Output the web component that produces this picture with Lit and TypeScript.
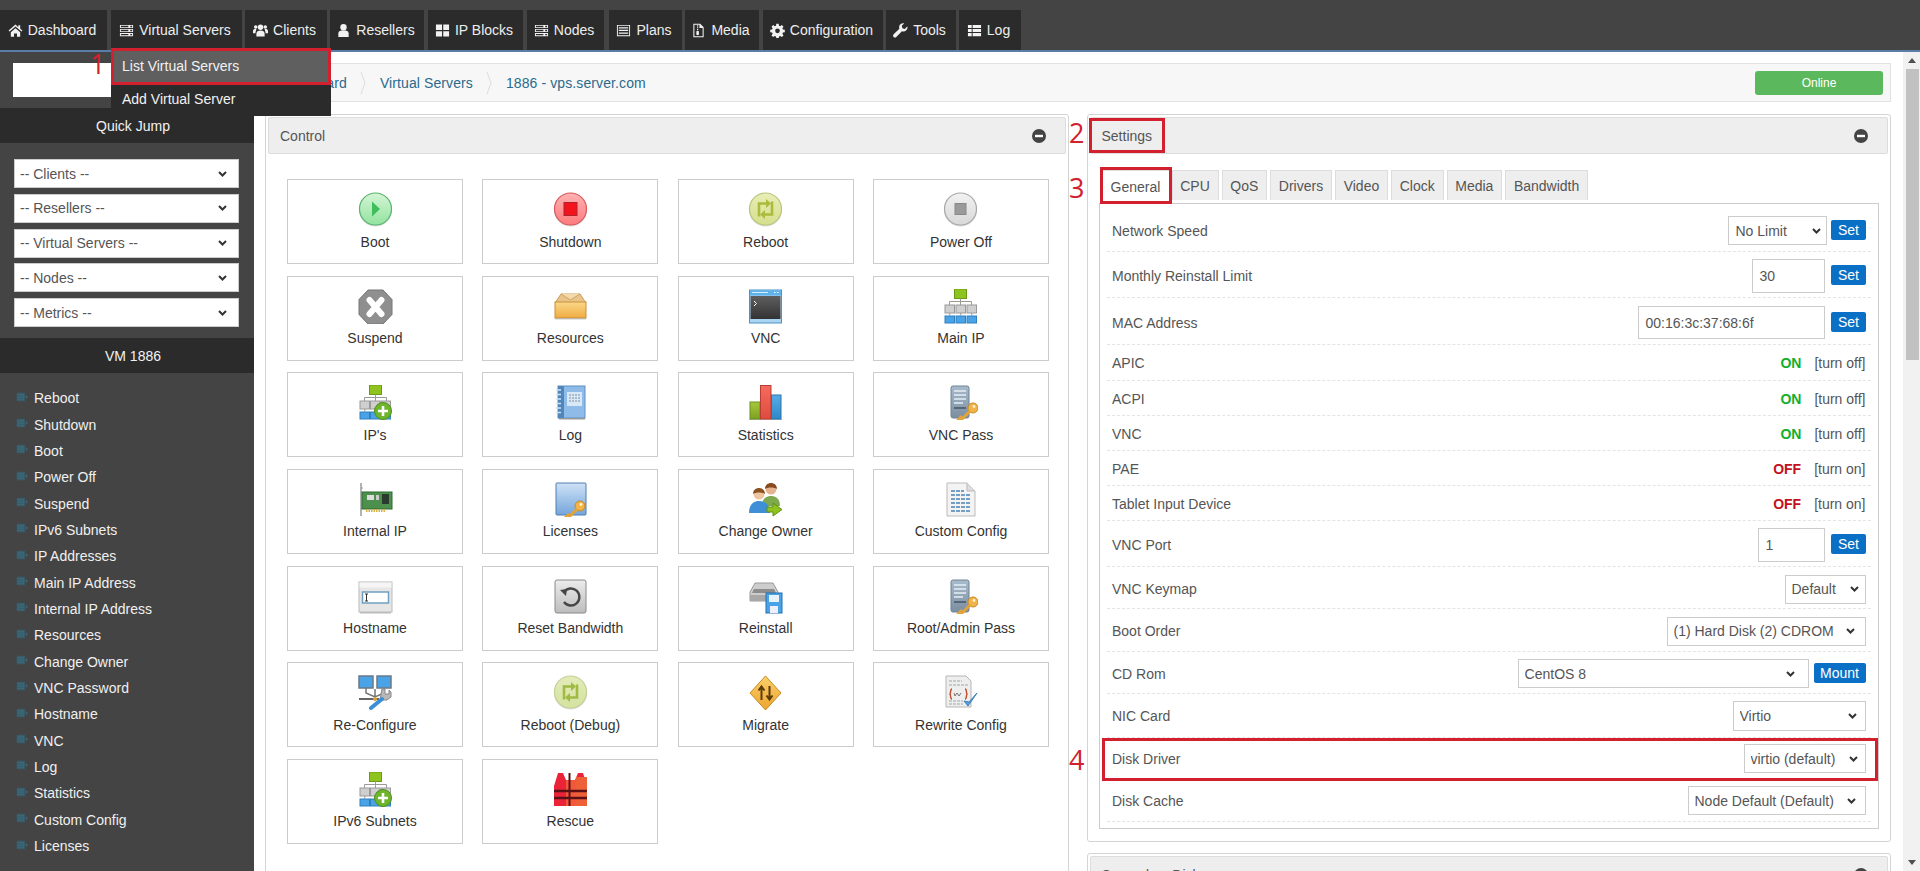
import { LitElement, html, css, svg } from "lit";
import { customElement } from "lit/decorators.js";

/* ---------- nav glyphs ---------- */
const serverGlyph = svg`<path d="M1 2h14v3.4H1zM2 3v1.4h8V3zM12 3v1.4h2V3zM1 6.3h14v3.4H1zM2 7.3v1.4h8V7.3zM12 7.3v1.4h2V7.3zM1 10.6h14V14H1zM2 11.6V13h8v-1.4zM12 11.6V13h2v-1.4z" fill-rule="evenodd"/>`;
const nav: Record<string, unknown> = {
  home: svg`<path d="M8 1.6.6 8l1 1.1L8 3.6l6.4 5.5 1-1.1-2.4-2V2.4h-2v2L8 1.6zM3 9.8 8 5.5l5 4.3V14.6H9.6v-3.4H6.4v3.4H3z"/>`,
  server: serverGlyph,
  users: svg`<circle cx="8" cy="4.6" r="2.9"/><path d="M3.6 14.4v-2.9C3.6 9.3 5.4 8 8 8s4.4 1.3 4.4 3.5v2.9z"/><circle cx="2.9" cy="4.3" r="1.9"/><circle cx="13.1" cy="4.3" r="1.9"/><path d="M0 11V8.5C0 7 1.2 6.4 2.4 6.4c.6 0 1 .1 1.3.3C3.5 7.400 2.800 8.500 2.600 11zM16 11V8.500C16 7 14.800 6.400 13.600 6.400c-.6 0-1 .1-1.300.3.2.7.9 1.800 1.100 4.300z"/>`,
  user: svg`<circle cx="8" cy="4.400" r="3.400"/><path d="M2.500 15v-3.800C2.500 9 4.500 7.800 8 7.800s5.500 1.200 5.500 3.400V15z"/>`,
  grid: svg`<path d="M1 1.500h6.500V7.500H1zM8.800 1.500H15V7.500H8.800zM1 8.800h6.500v5.700H1zM8.800 8.800H15v5.700H8.800z"/>`,
  plans: svg`<path fill-rule="evenodd" d="M1 2h14v12H1zM2 3v10h12V3zM3 4.500h10v1.300H3zM3 7.300h10v1.300H3zM3 10.100h10v1.300H3z"/>`,
  media: svg`<path fill-rule="evenodd" d="M2.500.8h7.300l3.700 3.700v10.700h-11zM3.600 1.900v12.200h8.800V5.300H9V1.900zM6.400 2.500h1.300v1.200H6.400zM6.400 4.500h1.300v1.200H6.400zM6.400 6.500h1.300v1.200H6.400zM5.900 8.500h2.300l.4 3.300c0 .8-.6 1.200-1.500 1.200s-1.500-.4-1.500-1.200z"/>`,
  cog: svg`<path fill-rule="evenodd" d="M6.700.8h2.600l.3 2 1.300.6 1.700-1.200 1.800 1.800-1.200 1.700.6 1.300 2 .3v2.600l-2 .3-.6 1.300 1.200 1.700-1.800 1.800-1.700-1.200-1.300.6-.3 2H6.700l-.3-2-1.300-.6-1.700 1.200-1.800-1.800 1.200-1.700-.6-1.300-2-.3V7.300l2-.3.6-1.300-1.200-1.700 1.800-1.800 1.700 1.200 1.300-.6zM8 5.800a2.500 2.500 0 1 0 0 5 2.500 2.500 0 0 0 0-5z"/>`,
  wrench: svg`<path d="M15.200 3.700 12.600 6.300 10 5.600 9.300 3 11.900.4C9.800-.2 7.600.8 6.800 2.800c-.4 1.100-.4 2.200 0 3.200L.7 12.100c-.8.8-.8 2 0 2.800s2 .8 2.800 0l6-6.100c2.900 1.100 6-1 6-4 0-.4 0-.8-.3-1.100z"/>`,
  list: svg`<path d="M1 2h4v3.400H1zM6 2h9v3.400H6zM1 6.300h4v3.400H1zM6 6.300h9v3.400H6zM1 10.600h4V14H1zM6 10.600h9V14H6z"/>`,
};

/* ---------- tile artwork ---------- */
const roundBtn = (grad: string, edge: string, inner: unknown) => svg`
  <ellipse cx="17.500" cy="18.500" rx="16.500" ry="16" fill="#000" opacity=".14"/>
  <circle cx="17.500" cy="17" r="16" fill="url(#${grad})" stroke="${edge}" stroke-width="1.200"/>${inner}`;
const loopArrows = (c: string) => svg`<g fill="none" stroke="${c}" stroke-width="2.600">
  <path d="M11 24.500V11.500h8"/><path d="M24 9.500v13h-8"/></g>
  <path d="M18 7l5 4.500-5 4.500z" fill="${c}"/><path d="M17 18l-5 4.500 5 4.500z" fill="${c}"/>`;
const key = (x: number, y: number) => svg`<g transform="translate(${x} ${y})">
  <circle cx="8" cy="-7" r="5" fill="#f0b44a" stroke="#c88a24"/><circle cx="9" cy="-8.500" r="1.400" fill="#fff3cf"/>
  <path d="M5-4-5 6l-1.500-1.500L-4 2-5 1" fill="none" stroke="#e2a33a" stroke-width="3"/></g>`;
const server = svg`<rect x="8" y="1" width="18" height="32" rx="2" fill="url(#gSrv)" stroke="#6f8294"/>
  <path d="M11 6h12M11 10h12M11 14h12M11 18h9" stroke="#e7eef4" stroke-width="1.600"/>
  <rect x="11" y="22" width="12" height="2" fill="#556677"/>`;
const netTree = (plus: boolean) => {
  const rows = plus ? [2, 12.500, 23] : [2, 13, 24];
  return svg`<rect x="11.500" y="0" width="12" height="9.500" fill="#8fc31f" stroke="#6c9a12"/>
  <path d="M17.500 9.500v3M6.500 16v-3.500h22V16M17.500 12.500V16" fill="none" stroke="#9a9a9a"/>
  ${rows.map((x) => svg`<rect x="${x}" y="16" width="9.500" height="8" fill="#cfcfcf" stroke="#9a9a9a"/>
    <path d="M${x + 4.750} 24v2.500" stroke="#9a9a9a"/>
    <rect x="${x}" y="27" width="9.500" height="7" fill="#4aa3e6" stroke="#2f80bf"/>`)}
  ${plus ? svg`<circle cx="25" cy="26" r="8.500" fill="#6fb52c" stroke="#4f8f18"/><path d="M25 21v10M20 26h10" stroke="#fff" stroke-width="2.600"/>` : ""}`;
};
const art: Record<string, unknown> = {
  boot: roundBtn("gGreen", "#59b36c", svg`<path d="M14 9.500v15l8-7.500z" fill="#3fbf5c"/>`),
  shutdown: roundBtn("gRed", "#d65b5b", svg`<rect x="11" y="10.500" width="13" height="13" fill="#f2131d" stroke="#b2222a"/>`),
  reboot: roundBtn("gOlive", "#b9c77d", loopArrows("#a9bc3c")),
  poweroff: roundBtn("gGrey", "#a8a8a8", svg`<rect x="12" y="11.500" width="11" height="11" fill="#9a9a9a" stroke="#888"/>`),
  suspend: svg`<path d="M10 1h15l9 9.500v15L25 35H10L1 25.500v-15z" fill="#8f8f8f" stroke="#777"/>
    <path d="M11.500 11 23.500 25M23.500 11 11.500 25" stroke="#fff" stroke-width="6" stroke-linecap="round"/>`,
  resources: svg`<path d="M8 5h19l6 9H2z" fill="#e8c48a" stroke="#c99a55"/><path d="M8 5l9.500 6L27 5" fill="#f3d8a9" stroke="#cfa463"/>
    <rect x="2" y="13" width="31" height="16" fill="url(#gOrange)" stroke="#c98f36"/><rect x="2" y="29" width="31" height="1.500" fill="#aaa" opacity=".6"/>`,
  vnc: svg`<rect x="1.500" y="1" width="32" height="33" fill="#a9d4f2" stroke="#4e93c6"/><rect x="2" y="1.500" width="31" height="5" fill="#5fb2ea"/>
    <path d="M4 3.500h16" stroke="#d6eeff"/><path d="M26 3.500h1.500M29 3.500h1.500" stroke="#fff"/>
    <rect x="2.500" y="7" width="30" height="23" fill="url(#gDark)"/><path d="M6 12l2.500 2.500L6 17" fill="none" stroke="#fff"/>`,
  mainip: netTree(false),
  ips: netTree(true),
  log: svg`<rect x="5" y="1" width="27" height="32" fill="#8fbbe9" stroke="#5d8fc4"/><rect x="5" y="1" width="6" height="32" fill="#4e86bd"/>
    <path d="M3 5h5M3 9.500h5M3 14h5M3 18.500h5M3 23h5M3 27.500h5" stroke="#d5e4f2" stroke-width="1.500"/>
    <rect x="14" y="7" width="15" height="14" fill="#d8e8f7"/><path d="M16 10h11M16 13h11M16 16h11" stroke="#7c8fa2" stroke-dasharray="2 1"/>
    <rect x="6" y="33" width="26" height="1.500" fill="#999"/>`,
  stats: svg`<rect x="1" y="34" width="33" height="1" fill="#bbb"/><rect x="2" y="17" width="10" height="17" fill="url(#gBarG)" stroke="#6b8f1e"/>
    <rect x="12.500" y="0.500" width="10.500" height="33.500" fill="url(#gBarR)" stroke="#b83e33"/><rect x="23.500" y="10" width="9.500" height="24" fill="url(#gBarB)" stroke="#2874ab"/>`,
  vncpass: svg`${server}${key(22, 30)}`,
  nic: svg`<path d="M3 1v33" stroke="#9a9a9a" stroke-width="1.500"/><path d="M3 6h2" stroke="#9a9a9a"/><rect x="4" y="10" width="30" height="17" fill="#4d8f4c" stroke="#2f6a32"/>
    <rect x="9" y="13" width="7" height="5" fill="#ddd"/><rect x="18" y="13" width="3" height="5" fill="#ccc"/><rect x="24" y="12" width="7" height="10" fill="#2b3a2e"/>
    <path d="M8 28.500h20" stroke="#d6b24c" stroke-width="3" stroke-dasharray="1.500 1"/>`,
  licenses: svg`<rect x="3" y="1" width="30" height="32" rx="1" fill="url(#gBook)" stroke="#4f7fae"/>${key(19, 31)}`,
  owner: svg`<circle cx="23" cy="7" r="5.500" fill="#e5b48f"/><path d="M17 7c0-8 12-8 12 0-3-2-9-2-12 0z" fill="#8a4a20"/><path d="M14 24c0-8 5-10 9-10s9 2 9 10z" fill="#7fa94e"/>
    <circle cx="11" cy="12" r="5.500" fill="#efc4a0"/><path d="M5 12c0-8 12-8 12 0-3-2-9-2-12 0z" fill="#8c5122"/><path d="M1 31c0-9 5-12 10-12s11 3 11 12z" fill="#3f8fd6"/>
    <path d="M19 25h6v-4l9 6.500-9 6.500v-4h-6z" fill="#8dc21f" stroke="#5f8f10"/>`,
  config: svg`<path d="M4 1h20l8 8v25H4z" fill="#f3f3f3" stroke="#bbb"/><path d="M24 1v8h8" fill="#ddd" stroke="#bbb"/>
    <path d="M8 9h13M8 13h20M8 17h20M8 21h20M8 25h20M8 29h20" stroke="#4a83b8" stroke-width="1.500" stroke-dasharray="4 1"/>`,
  hostname: svg`<rect x="1" y="3" width="33" height="30" fill="#e6e6e6" stroke="#bcbcbc"/><rect x="1.500" y="3.500" width="32" height="5" fill="#f5f5f5"/>
    <rect x="4.500" y="13" width="26" height="11" fill="#fff" stroke="#6fa0bf" stroke-width="1.500"/><path d="M7 15h3M8.500 15v7M7 22h3" stroke="#333"/><rect x="2" y="33" width="31" height="1.500" fill="#bbb"/>`,
  resetbw: svg`<rect x="2" y="1" width="31" height="33" rx="2" fill="url(#gGrey2)" stroke="#8a8a8a"/>
    <path d="M11 13a8.500 8.500 0 1 1 0 10" fill="none" stroke="#454545" stroke-width="2.400"/><path d="M7 11l7-1-1 7z" fill="#454545"/>`,
  reinstall: svg`<path d="M7 4h18l5 9v9H2v-9z" fill="#cdcdcd" stroke="#9a9a9a"/><path d="M6 10h20l2 4H4z" fill="#8c8c8c"/><rect x="2" y="16" width="28" height="6" fill="#a8a8a8"/>
    <rect x="18" y="14" width="16" height="20" fill="#4aa3e6" stroke="#2272ad"/><rect x="21" y="16" width="10" height="7" fill="#e7f2fa"/><rect x="22" y="27" width="8" height="7" fill="#eef"/>`,
  rootpass: svg`${server}${key(22, 30)}`,
  reconfig: svg`<rect x="1" y="1" width="14" height="12" fill="#4aa3e6" stroke="#6a7a88" stroke-width="1.500"/><rect x="19" y="1" width="14" height="12" fill="#4aa3e6" stroke="#6a7a88" stroke-width="1.500"/>
    <path d="M8 13v5l9 4 9-4v-5M17 14v12" fill="none" stroke="#777" stroke-width="1.500"/><path d="M1 24h20" stroke="#666" stroke-width="2"/><circle cx="17" cy="24" r="2" fill="#e2a33a"/>
    <path d="M24 14l3 0v5l4 0v-4l2 2v5l-4 3-7 0z" fill="#b8b8b8" stroke="#888"/><path d="M24 24 13 33" stroke="#3b8fd6" stroke-width="4" stroke-linecap="round"/>`,
  debug: roundBtn("gOlive2", "#c4d196", loopArrows("#9fbb45")),
  migrate: svg`<path d="M17.500 1 33 18 17.500 35 2 18z" fill="url(#gSign)" stroke="#c58a1f"/>
    <path d="M13.500 25V13M10.500 15.500l3-4 3 4M21.500 11v12M18.500 20.500l3 4 3-4" fill="none" stroke="#5c3b0a" stroke-width="2"/>`,
  rewrite: svg`<path d="M3 1h20l5 5v26H3z" fill="#eee" stroke="#b5b5b5"/><path d="M6 6h13M6 10h19M6 26h14M6 29h14" stroke="#9aa" stroke-dasharray="3 1"/>
    <path d="M9 14c-2 0-1 4-2 5 1 1 0 5 2 5M22 14c2 0 1 4 2 5-1 1 0 5-2 5" fill="none" stroke="#c04a2a" stroke-width="1.400"/><path d="M11 18l1 3 2-3 2 3 2-3" fill="none" stroke="#777"/>
    <path d="M21 26l4 5 9-13-8 9z" fill="#5aa0dd" stroke="#3a80bd"/>`,
  rescue: svg`<path d="M5 1h5l3 7h9l3-7h5l4 13v20H1V14z" fill="#ea2338"/><rect x="13" y="8" width="10" height="26" fill="#f4583a"/><rect x="23" y="5" width="11" height="29" fill="#ee6038"/>
    <path d="M16.500 1v33" stroke="#5a1015" stroke-width="2"/><path d="M1 19h33M1 26h33" stroke="#5a1015" stroke-width="2.600"/>`,
};

const tiles: [string, string][] = [
  ["Boot", "boot"], ["Shutdown", "shutdown"], ["Reboot", "reboot"], ["Power Off", "poweroff"],
  ["Suspend", "suspend"], ["Resources", "resources"], ["VNC", "vnc"], ["Main IP", "mainip"],
  ["IP's", "ips"], ["Log", "log"], ["Statistics", "stats"], ["VNC Pass", "vncpass"],
  ["Internal IP", "nic"], ["Licenses", "licenses"], ["Change Owner", "owner"], ["Custom Config", "config"],
  ["Hostname", "hostname"], ["Reset Bandwidth", "resetbw"], ["Reinstall", "reinstall"], ["Root/Admin Pass", "rootpass"],
  ["Re-Configure", "reconfig"], ["Reboot (Debug)", "debug"], ["Migrate", "migrate"], ["Rewrite Config", "rewrite"],
  ["IPv6 Subnets", "ips"], ["Rescue", "rescue"],
];

const navItems: [string, string, number, number][] = [
  ["Dashboard", "home", 107, 4], ["Virtual Servers", "server", 131, 3], ["Clients", "users", 82, 3],
  ["Resellers", "user", 94, 4], ["IP Blocks", "grid", 95, 4], ["Nodes", "server", 77, 5],
  ["Plans", "plans", 73, 3], ["Media", "media", 74, 4], ["Configuration", "cog", 120, 3],
  ["Tools", "wrench", 70, 3], ["Log", "list", 62, 0],
];

const sideLinks = ["Reboot", "Shutdown", "Boot", "Power Off", "Suspend", "IPv6 Subnets", "IP Addresses", "Main IP Address",
  "Internal IP Address", "Resources", "Change Owner", "VNC Password", "Hostname", "VNC", "Log", "Statistics", "Custom Config", "Licenses"];
const jumps = ["-- Clients --", "-- Resellers --", "-- Virtual Servers --", "-- Nodes --", "-- Metrics --"];
const settingTabs = ["CPU", "QoS", "Drivers", "Video", "Clock", "Media", "Bandwidth"];

type Row = { label: string; h: number; pt?: number; sel?: string; chev?: number; inp?: string; w?: number; ch?: number; btn?: string; gap?: number; on?: boolean };
const rows: Row[] = [
  { label: "Network Speed", h: 42, sel: "No Limit", chev: 5, w: 99, ch: 29, btn: "Set", gap: 4 },
  { label: "Monthly Reinstall Limit", h: 46, pt: 3, inp: "30", w: 73, ch: 34, btn: "Set", gap: 6 },
  { label: "MAC Address", h: 47, pt: 3, inp: "00:16:3c:37:68:6f", w: 187, ch: 33, btn: "Set", gap: 6 },
  { label: "APIC", h: 36, pt: 1, on: true },
  { label: "ACPI", h: 35, pt: 2, on: true },
  { label: "VNC", h: 35, pt: 2, on: true },
  { label: "PAE", h: 35, pt: 2, on: false },
  { label: "Tablet Input Device", h: 35, pt: 2, on: false },
  { label: "VNC Port", h: 46, pt: 3, inp: "1", w: 67, ch: 34, btn: "Set", gap: 6 },
  { label: "VNC Keymap", h: 42, pt: 3, sel: "Default", chev: 5.500, w: 81, ch: 29 },
  { label: "Boot Order", h: 43, pt: 2, sel: "(1) Hard Disk (2) CDROM", chev: 9.500, w: 199, ch: 29 },
  { label: "CD Rom", h: 42, pt: 2, sel: "CentOS 8", chev: 12.500, w: 291, ch: 29, btn: "Mount", gap: 5 },
  { label: "NIC Card", h: 44, sel: "Virtio", chev: 7.500, w: 133, ch: 30 },
  { label: "Disk Driver", h: 42, sel: "virtio (default)", chev: 6.500, w: 122, ch: 29 },
  { label: "Disk Cache", h: 42, sel: "Node Default (Default)", chev: 8.500, w: 178, ch: 29 },
];

@customElement("app-root")
export class AppRoot extends LitElement {
  static styles = css`
    :host { display: block; position: relative; width: 100%; height: 871px; overflow: hidden; background: #fff;
      font-family: "Liberation Sans", Arial, sans-serif; font-size: 14px; color: #555; }
    * { box-sizing: border-box; }
    .defs { position: absolute; width: 0; height: 0; }

    .topbar { height: 52px; background: #444; border-bottom: 2px solid #5b7ea9; padding-top: 10px; display: flex; align-items: stretch; }
    .tab { height: 40px; background: #2b2b2b; color: #eee; display: flex; align-items: center; justify-content: center; gap: 5px; white-space: nowrap; padding-right: 3px; }
    .tab svg { width: 15px; height: 15px; fill: #f2f2f2; flex: none; }

    .layout { display: flex; height: 819px; }
    .side { width: 254px; flex: none; background: #444; color: #eee; padding-top: 11px; }
    .search { display: block; width: 226px; height: 34px; margin: 0 0 11px 13px; background: #fff; border: 0; }
    .bar { height: 35px; background: #2b2b2b; color: #f2f2f2; display: flex; align-items: center; justify-content: center; padding-left: 12px; }
    .jumps { display: flex; flex-direction: column; gap: 5.750px; padding: 16px 15px 11px 14px; }
    select { appearance: none; -webkit-appearance: none; background-color: #fff; background-repeat: no-repeat;
      background-size: 9px 6px;
      background-image: url("data:image/svg+xml,%3Csvg xmlns='http://www.w3.org/2000/svg' viewBox='0 0 9 6'%3E%3Cpath d='M1 1l3.500 3.500L8 1' fill='none' stroke='%23333' stroke-width='2'/%3E%3C/svg%3E");
      background-position: right var(--chev, 11.500px) center; }
    .jumps select { width: 225px; height: 29px; border: 1px solid #ccc; color: #555;
      font: 14px "Liberation Sans", Arial, sans-serif; padding: 0 5px; border-radius: 0; }
    .links { list-style: none; margin: 0; padding: 12px 0 0 16px; }
    .links li { height: 26.350px; display: flex; align-items: center; gap: 6px; color: #f0f0f0; }
    .links svg { width: 12px; height: 12px; flex: none; margin-top: -3px; }

    .main { flex: 1; min-width: 0; padding: 11px 12px 0 11px; overflow: hidden; }
    .crumbs { height: 39px; background: #f7f7f7; border: 1px solid #e2e2e2; display: flex; align-items: center; padding: 0 7px 0 11.500px; color: #2a6a8c; letter-spacing: .1px; }
    .crumbs .sep { width: 33px; height: 26px; display: flex; justify-content: center; align-items: center; }
    .crumbs .sep svg { width: 6px; height: 24px; }
    .online { margin-left: auto; width: 128px; height: 24px; border-radius: 3px; background: #5cb85c; color: #fff; font-size: 12px; letter-spacing: 0; display: flex; align-items: center; justify-content: center; }

    .cols { display: grid; grid-template-columns: 804px 804.500px; column-gap: 17.500px; margin-top: 12px; align-items: start; }
    .stack { display: flex; flex-direction: column; gap: 11px; }
    .panel { border: 1px solid #d4d4d4; border-radius: 3px; padding: 2px; background: #fff; }
    .panel.tall { min-height: 800px; }
    .phead { height: 37px; background: #eee; border: 1px solid #ddd; border-radius: 2px; display: flex; align-items: center; justify-content: space-between; padding: 0 11px; color: #555; }
    .phead svg { width: 14px; height: 14px; margin-right: 8px; }

    .tiles { display: grid; grid-template-columns: repeat(4, 176px); column-gap: 19.330px; row-gap: 11.670px; padding: 25px 0 0 19px; }
    .t { height: 85px; border: 1px solid #ccc; display: flex; flex-direction: column; align-items: center; padding-top: 12px; color: #333; }
    .t svg { width: 35px; height: 35px; flex: none; }
    .t span { margin-top: 4.500px; line-height: 20px; }

    .pbody { padding: 16px 9.500px 10px 9.500px; }
    .tabs { display: flex; gap: 3px; height: 30px; margin: 0 0 3px .5px; }
    .tb { border: 1px solid #ddd; border-bottom: 0; background: #eee; display: flex; align-items: center; justify-content: center; color: #555; padding: 0 7.750px; }
    .tb.active { background: #fff; width: 72px; height: 34px; margin-right: -3px; padding: 0 0 2px; }
    .box { border: 1px solid #ccc; padding: 6px 7px; background: #fff; }
    .row { display: flex; align-items: center; justify-content: flex-end; border-bottom: 1px dashed #e4e4e4; padding-right: 5px; padding-left: 5px; }
    .row .lbl { margin-right: auto; color: #555; }
    .ctl { border: 1px solid #ccc; background-color: #fff; color: #555; font: 14px "Liberation Sans", Arial, sans-serif; border-radius: 0; }
    select.ctl { padding: 0 6px; }
    input.ctl { padding: 0 6px; outline: none; }
    .btn { height: 20px; margin-bottom: 2px; padding: 0 6.500px; min-width: 34px; background: #0a70c5; color: #fff; border-radius: 2px; display: flex; align-items: center; justify-content: center; }
    .on, .off { font-weight: 700; margin-right: 13px; }
    .on { color: #10b02c; } .off { color: #c4101d; }

    .scroll { width: 17px; flex: none; background: #f1f1f1; display: flex; flex-direction: column; align-items: center; }
    .sbtn { width: 17px; height: 17px; display: flex; align-items: center; justify-content: center; flex: none; }
    .sbtn svg { width: 8px; height: 5px; fill: #505050; }
    .thumb { width: 13px; height: 291px; background: #c1c1c1; margin-left: 2px; }
    .grow { flex: 1; }

    .dropdown { position: absolute; left: 111px; top: 50px; width: 220px; height: 66px; background: #2b2b2b; color: #f2f2f2; z-index: 2; }
    .dropdown div { padding-left: 11px; padding-bottom: 3px; display: flex; align-items: center; }
    .dropdown .hi { height: 35px; background: #5f5f5f; }
    .dropdown .lo { height: 31px; }

    .mark { position: absolute; border: 3px solid #d2202e; z-index: 3; }
    .m-list { left: 111px; top: 48px; width: 220px; height: 37px; }
    .m-set { left: 1089px; top: 118px; width: 76px; height: 35px; }
    .m-gen { left: 1100px; top: 167px; width: 72px; height: 37px; }
    .m-disk { left: 1102px; top: 738px; width: 776px; height: 43px; }
    .num { position: absolute; z-index: 3; color: #d2202e; font: 27px/27px "Open Sans", sans-serif; }
    .n1 { left: 90px; top: 50px; } .n2 { left: 1069px; top: 119px; } .n3 { left: 1069px; top: 174px; } .n4 { left: 1069px; top: 746px; }
  `;

  private defs() {
    const g = (id: string, a: string, b: string) => svg`<linearGradient id="${id}" x1="0" y1="0" x2="0" y2="1"><stop offset="0" stop-color="${a}"/><stop offset="1" stop-color="${b}"/></linearGradient>`;
    return html`<svg class="defs" aria-hidden="true"><defs>
      ${g("gGreen", "#d3f5d6", "#93e39f")}${g("gRed", "#ffb3b3", "#ff7a7d")}${g("gOlive", "#e9eeb6", "#d5df8d")}${g("gOlive2", "#e3ecb8", "#d5e29f")}
      ${g("gGrey", "#f2f2f2", "#d8d8d8")}${g("gGrey2", "#ececec", "#bdbdbd")}${g("gOrange", "#fbd88a", "#efab41")}${g("gDark", "#5e5e5e", "#333")}
      ${g("gSrv", "#a8bccd", "#7b8ea1")}${g("gBook", "#cfe2f6", "#74a5dc")}${g("gSign", "#fbd06a", "#eda42f")}
      ${g("gBarG", "#a6c83c", "#7da021")}${g("gBarR", "#f66b5e", "#de4b3e")}${g("gBarB", "#57ace6", "#2e88c9")}
    </defs></svg>`;
  }

  private control(r: Row) {
    if (r.on !== undefined) {
      return html`<span class=${r.on ? "on" : "off"}>${r.on ? "ON" : "OFF"}</span><span>${r.on ? "[turn off]" : "[turn on]"}</span>`;
    }
    const style = `width:${r.w}px;height:${r.ch}px;margin-right:${r.btn ? r.gap : 0}px${r.chev ? `;--chev:${r.chev}px` : ""}`;
    return html`${r.sel
      ? html`<select class="ctl" style=${style}><option>${r.sel}</option></select>`
      : html`<input class="ctl" style=${style} .value=${r.inp ?? ""} />`}
      ${r.btn ? html`<span class="btn">${r.btn}</span>` : ""}`;
  }

  private minus() {
    return html`<svg viewBox="0 0 14 14"><circle cx="7" cy="7" r="7" fill="#444"/><rect x="3" y="5.800" width="8" height="2.400" fill="#fff"/></svg>`;
  }

  render() {
    const sep = html`<span class="sep"><svg viewBox="0 0 6 24"><path d="M1 1l4 11-4 11" fill="none" stroke="#ddd"/></svg></span>`;
    return html`
      ${this.defs()}
      <header class="topbar">
        ${navItems.map(([t, i, w, m]) => html`<div class="tab" style="width:${w}px;margin-right:${m}px">
          <svg viewBox="0 0 16 16">${nav[i]}</svg>${t}</div>`)}
      </header>
      <div class="layout">
        <aside class="side">
          <input class="search" aria-label="Search" />
          <div class="bar">Quick Jump</div>
          <div class="jumps">${jumps.map((j) => html`<select><option>${j}</option></select>`)}</div>
          <div class="bar">VM 1886</div>
          <ul class="links">
            ${sideLinks.map((l) => html`<li><svg viewBox="0 0 11 11"><path d="M1 2h7v7H1zM3.300 1v9M5.700 1v9M0 4.500h9M0 6.800h9" fill="#3f6b7a" stroke="#35596a" stroke-width=".6"/><path d="M9 4l2 1.500L9 7z" fill="#3f6b7a"/></svg>${l}</li>`)}
          </ul>
        </aside>
        <main class="main">
          <nav class="crumbs">
            <span>Dashboard</span>${sep}<span>Virtual Servers</span>${sep}<span>1886 - vps.server.com</span>
            <span class="online">Online</span>
          </nav>
          <div class="cols">
            <section class="panel tall">
              <div class="phead"><span>Control</span>${this.minus()}</div>
              <div class="tiles">
                ${tiles.map(([t, i]) => html`<div class="t"><svg viewBox="0 0 35 35">${art[i]}</svg><span>${t}</span></div>`)}
              </div>
            </section>
            <div class="stack">
              <section class="panel">
                <div class="phead"><span>Settings</span>${this.minus()}</div>
                <div class="pbody">
                  <div class="tabs">
                    <div class="tb active">General</div>
                    ${settingTabs.map((t) => html`<div class="tb">${t}</div>`)}
                  </div>
                  <div class="box">
                    ${rows.map((r) => html`<div class="row" style="height:${r.h}px;padding-top:${r.pt ?? 0}px"><span class="lbl">${r.label}</span>${this.control(r)}</div>`)}
                  </div>
                </div>
              </section>
              <section class="panel">
                <div class="phead"><span>Secondary Disk</span>${this.minus()}</div>
              </section>
            </div>
          </div>
        </main>
        <div class="scroll">
          <div class="sbtn"><svg viewBox="0 0 8 5"><path d="M4 0l4 5H0z"/></svg></div>
          <div class="thumb"></div>
          <div class="grow"></div>
          <div class="sbtn"><svg viewBox="0 0 8 5"><path d="M0 0h8L4 5z"/></svg></div>
        </div>
      </div>

      <div class="dropdown"><div class="hi">List Virtual Servers</div><div class="lo">Add Virtual Server</div></div>
      <div class="mark m-list"></div><div class="mark m-set"></div><div class="mark m-gen"></div><div class="mark m-disk"></div>
      <span class="num n1">1</span><span class="num n2">2</span><span class="num n3">3</span><span class="num n4">4</span>
    `;
  }
}
